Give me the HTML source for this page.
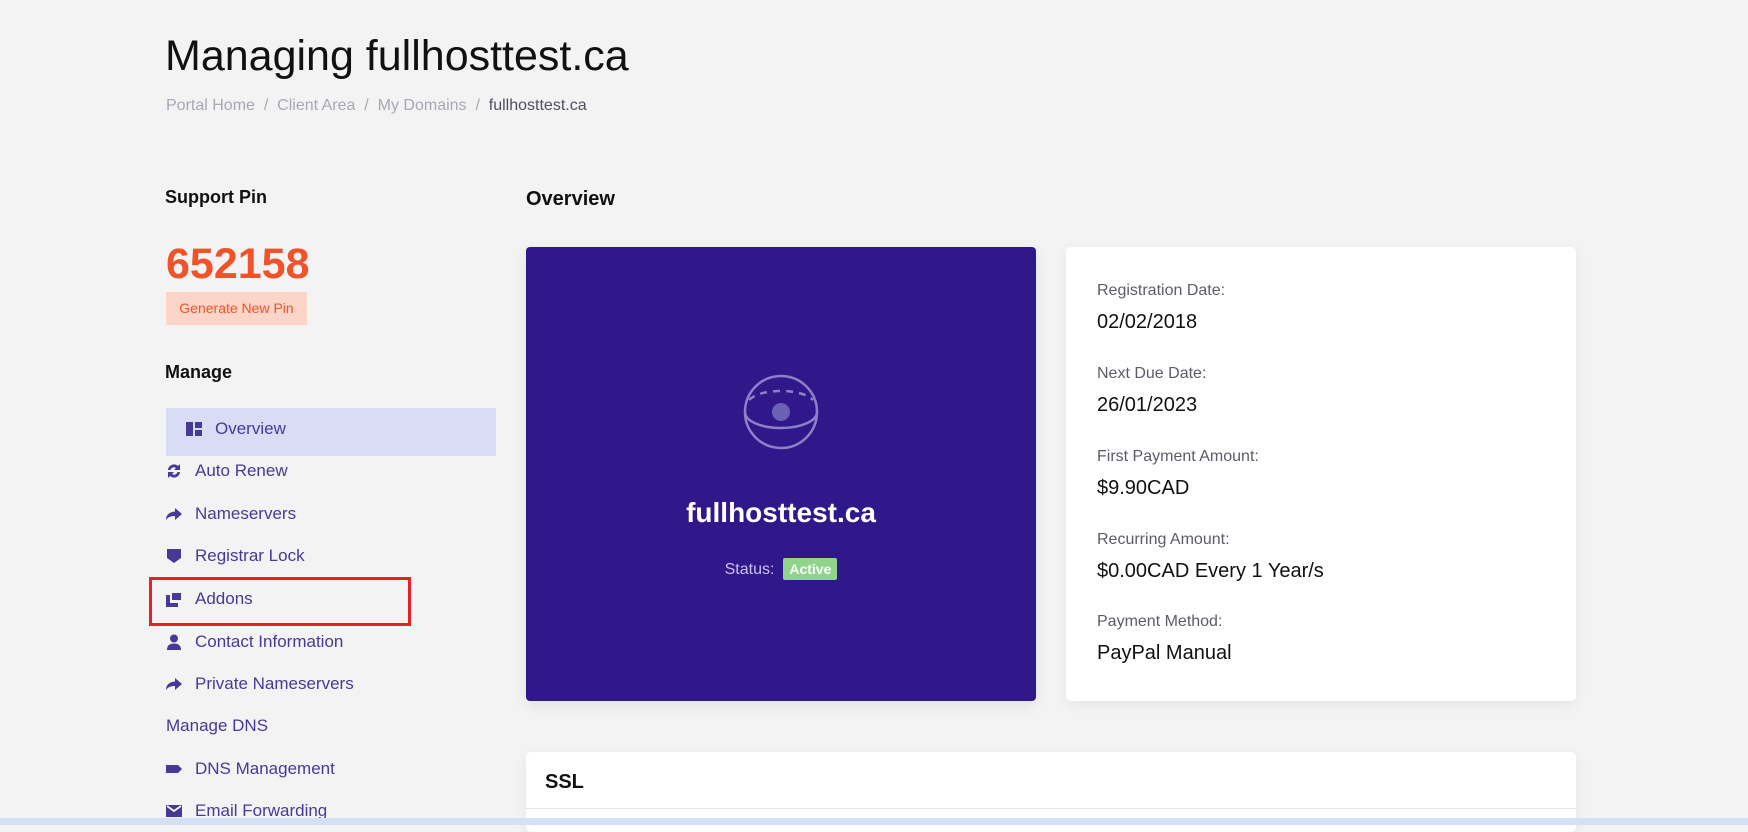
<!DOCTYPE html>
<html><head><meta charset="utf-8"><style>
*{margin:0;padding:0;box-sizing:border-box}
body{width:1748px;height:825px;overflow:hidden;background:#f3f3f3;font-family:"Liberation Sans",Arial,sans-serif;position:relative}
.a{position:absolute;white-space:nowrap}
.nav{position:absolute;left:166px;font-size:17px;color:#463a96;display:flex;align-items:center;height:24px}
.nav svg{width:16px;height:16px;margin-right:13px;fill:#463a96}
.lbl{font-size:16px;color:#5c5c66}
.val{font-size:20px;color:#111}
</style></head><body>
<div class="a" style="left:165px;top:32px;font-size:43px;color:#111">Managing fullhosttest.ca</div>
<div class="a" style="left:166px;top:97px;font-size:16px;color:#a6a8b4">Portal Home &nbsp;/&nbsp; Client Area &nbsp;/&nbsp; My Domains &nbsp;/&nbsp; <span style="color:#505060">fullhosttest.ca</span></div>

<div class="a" style="left:165px;top:187px;font-size:18px;font-weight:bold;color:#111">Support Pin</div>
<div class="a" style="left:166px;top:240px;font-size:43px;font-weight:bold;color:#f0522a">652158</div>
<div class="a" style="left:166px;top:292px;width:141px;height:33px;background:#fdd5c8;color:#f0522a;font-size:14px;line-height:33px;text-align:center">Generate New Pin</div>
<div class="a" style="left:165px;top:362px;font-size:18px;font-weight:bold;color:#111">Manage</div>

<div class="a" style="left:166px;top:408px;width:330px;height:48px;background:#d9dcf5"></div>
<div class="nav" style="left:186px;top:417px"><svg viewBox="0 0 16 16"><rect x="0" y="1" width="7" height="14"/><rect x="9" y="1" width="7" height="6"/><rect x="9" y="9" width="7" height="6"/></svg>Overview</div>
<div class="nav" style="top:459px"><svg viewBox="0 0 16 16"><path d="M2 7a6 6 0 0 1 10-4l2-2v6H8l2-2a3.5 3.5 0 0 0-5.5 2zM14 9a6 6 0 0 1-10 4l-2 2V9h6l-2 2a3.5 3.5 0 0 0 5.5-2z"/></svg>Auto Renew</div>
<div class="nav" style="top:502px"><svg viewBox="0 0 16 16"><path d="M9 2l7 6-7 6v-4C5 10 2 11 0 14c0-5 3-8 9-8.5z"/></svg>Nameservers</div>
<div class="nav" style="top:544px"><svg viewBox="0 0 16 16"><path d="M1 1h14v9l-7 5-7-5z"/></svg>Registrar Lock</div>
<div class="nav" style="top:587px"><svg viewBox="0 0 16 16"><path d="M0 4h4v8h8v4H0z M6 2h9v7H6z"/></svg>Addons</div>
<div class="nav" style="top:630px"><svg viewBox="0 0 16 16"><circle cx="8" cy="4.5" r="4"/><path d="M1 16c0-5 3-6.5 7-6.5s7 1.5 7 6.5z"/></svg>Contact Information</div>
<div class="nav" style="top:672px"><svg viewBox="0 0 16 16"><path d="M9 2l7 6-7 6v-4C5 10 2 11 0 14c0-5 3-8 9-8.5z"/></svg>Private Nameservers</div>
<div class="a" style="left:166px;top:716px;font-size:17px;color:#463a96">Manage DNS</div>
<div class="nav" style="top:757px"><svg viewBox="0 0 16 16"><path d="M0 4h12l4 4-4 4H0z"/></svg>DNS Management</div>
<div class="nav" style="top:799px"><svg viewBox="0 0 16 16"><path d="M0 2h16v12H0z" /><path d="M1 3l7 5 7-5" stroke="#f3f3f3" stroke-width="1.8" fill="none"/></svg>Email Forwarding</div>
<div class="a" style="left:149px;top:577px;width:262px;height:49px;border:3px solid #e8202a"></div>

<div class="a" style="left:526px;top:188px;font-size:20px;font-weight:bold;color:#111">Overview</div>

<div class="a" style="left:526px;top:247px;width:510px;height:454px;background:#31188a;border-radius:4px;box-shadow:0 4px 14px rgba(0,0,0,.08)">
  <svg class="a" style="left:217px;top:127px" width="76" height="76" viewBox="0 0 76 76" fill="none" stroke="#8d80c8" stroke-width="2.5">
    <circle cx="38" cy="38" r="36"/>
    <path d="M2 38c0 9 16 16 36 16s36-7 36-16"/>
    <path d="M6 26c6-6 18-9 32-9s26 3 32 9" stroke-dasharray="7 6"/>
    <circle cx="38" cy="38" r="9" fill="#6b60b4" stroke="none"/>
  </svg>
  <div class="a" style="left:0;width:510px;top:250px;text-align:center;font-size:28px;font-weight:bold;color:#fff">fullhosttest.ca</div>
  <div class="a" style="left:0;width:510px;top:311px;text-align:center;font-size:16px;color:#c8c2e8">Status: &nbsp;<span style="display:inline-block;background:#8fd48a;color:#fff;font-weight:bold;font-size:14px;padding:3px 6px;border-radius:2px">Active</span></div>
</div>

<div class="a" style="left:1066px;top:247px;width:510px;height:454px;background:#fff;border-radius:5px;box-shadow:0 4px 14px rgba(0,0,0,.06)">
  <div class="a lbl" style="left:31px;top:35px">Registration Date:</div>
  <div class="a val" style="left:31px;top:64px">02/02/2018</div>
  <div class="a lbl" style="left:31px;top:118px">Next Due Date:</div>
  <div class="a val" style="left:31px;top:147px">26/01/2023</div>
  <div class="a lbl" style="left:31px;top:201px">First Payment Amount:</div>
  <div class="a val" style="left:31px;top:230px">$9.90CAD</div>
  <div class="a lbl" style="left:31px;top:284px">Recurring Amount:</div>
  <div class="a val" style="left:31px;top:313px">$0.00CAD Every 1 Year/s</div>
  <div class="a lbl" style="left:31px;top:366px">Payment Method:</div>
  <div class="a val" style="left:31px;top:395px">PayPal Manual</div>
</div>

<div class="a" style="left:526px;top:752px;width:1050px;height:80px;background:#fff;border-radius:5px;box-shadow:0 4px 14px rgba(0,0,0,.06)">
  <div class="a" style="left:19px;top:19px;font-size:20px;font-weight:bold;color:#111">SSL</div>
  <div class="a" style="left:0;top:56px;width:1050px;height:1px;background:#e4e4ea"></div>
</div>
<div class="a" style="left:0;top:818px;width:1748px;height:7px;background:#d6e0f5"></div>
</body></html>
